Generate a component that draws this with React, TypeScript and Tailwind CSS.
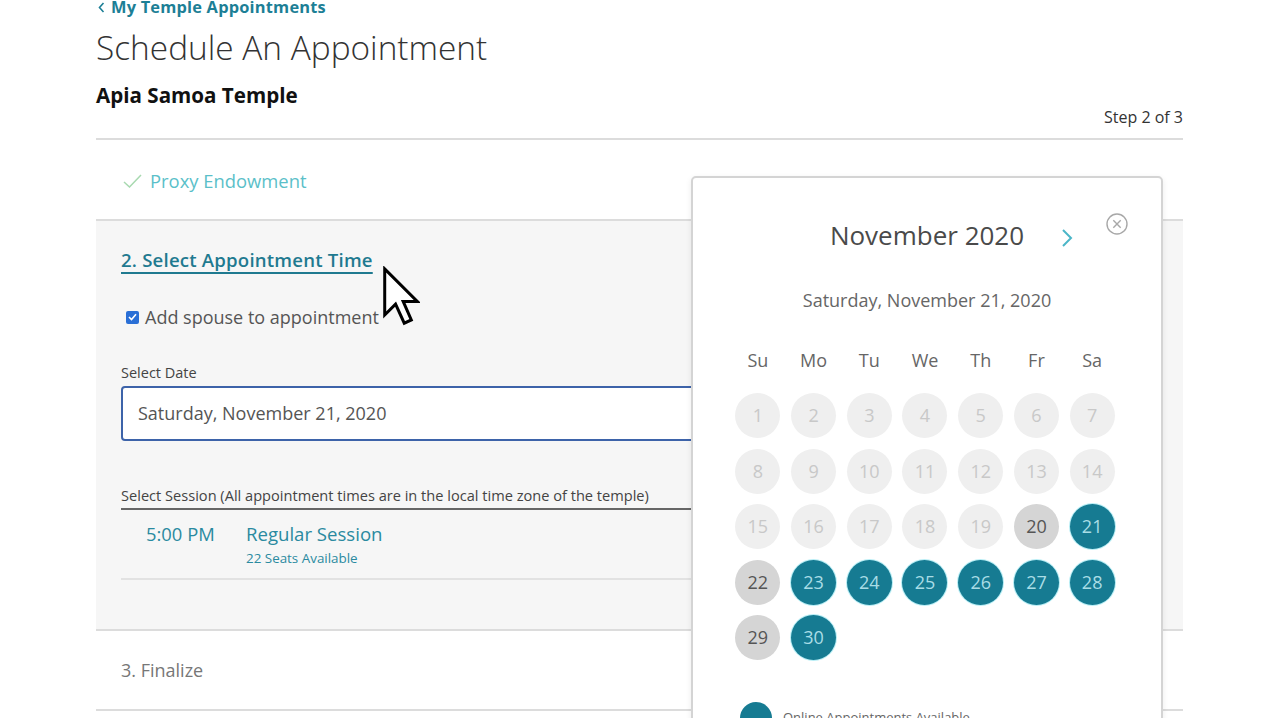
import React from "react";

const disabled = Array.from({ length: 19 }, (_, i) => i + 1);

type Day = { n: number; kind: "off" | "gray" | "teal" };

const days: Day[] = [
  ...disabled.map((n) => ({ n, kind: "off" as const })),
  { n: 20, kind: "gray" },
  { n: 21, kind: "teal" },
  { n: 22, kind: "gray" },
  { n: 23, kind: "teal" },
  { n: 24, kind: "teal" },
  { n: 25, kind: "teal" },
  { n: 26, kind: "teal" },
  { n: 27, kind: "teal" },
  { n: 28, kind: "teal" },
  { n: 29, kind: "gray" },
  { n: 30, kind: "teal" },
];

function DayCell({ d }: { d: Day }) {
  const cls =
    d.kind === "off"
      ? "bg-[#efefef] text-[#c8c8c8]"
      : d.kind === "gray"
      ? "bg-[#d5d5d5] text-[#555555]"
      : "bg-[#167b92] text-[#a9dde6] ring-1 ring-[#b8eef5]";
  return (
    <div className="h-[55.5px] flex items-center justify-center">
      <div className={`w-[45px] h-[45px] rounded-full flex items-center justify-center text-[18px] ${cls}`}>
        {d.n}
      </div>
    </div>
  );
}

export default function App() {
  return (
    <div className="relative w-full h-[718px] overflow-hidden bg-white font-['Open_Sans',sans-serif] text-[#333]">
      <div className="ml-[96px] w-[1087px]">
        <div className="-mt-[3px] flex items-center gap-[6px] text-[16.4px] leading-[20px] font-bold text-[#1d7f96]">
          <svg width="7" height="11" viewBox="0 0 7 11" className="ml-[2px]">
            <path d="M5.5 1 L1.5 5.5 L5.5 10" fill="none" stroke="#1d7f96" strokeWidth="1.6" />
          </svg>
          <span className="tracking-[0.2px]">My Temple Appointments</span>
        </div>
        <h1 className="mt-[10px] text-[33.4px] leading-[40px] font-light text-[#333]">
          Schedule An Appointment
        </h1>
        <div className="mt-[14px] flex justify-between">
          <div className="text-[20.6px] leading-[28px] font-bold text-[#111]">Apia Samoa Temple</div>
          <div className="pt-[25px] text-[16px] leading-[22px] text-[#333]">Step 2 of 3</div>
        </div>
        <div className="mt-[10px] border-t-2 border-[#dcdcdc]" />
        <div className="h-[79px] flex items-center pl-[27px] pt-[3px] gap-[8px]">
          <svg width="19" height="14" viewBox="0 0 19 14">
            <path d="M1 8 L6.5 13 L18 1" fill="none" stroke="#a8d9b0" strokeWidth="1.5" />
          </svg>
          <span className="text-[18.4px] text-[#5bbfc9]">Proxy Endowment</span>
        </div>
        <div className="border-t-2 border-[#dcdcdc]" />
        <div className="bg-[#f6f6f6] px-[25px] pt-[26px] pb-[49px]">
          <div className="text-[18.6px] leading-[26px] font-semibold tracking-[0.2px] text-[#1f7a90] underline underline-offset-[5px] decoration-[1.5px]">
            2. Select Appointment Time
          </div>
          <div className="mt-[31px] flex items-center gap-[6px] h-[26px]">
            <div className="ml-[5px] w-[13px] h-[13px] rounded-[2px] bg-[#2a6fd6] flex items-center justify-center">
              <svg width="9" height="8" viewBox="0 0 9 8">
                <path d="M1 4 L3.5 6.5 L8 1.2" fill="none" stroke="white" strokeWidth="1.6" />
              </svg>
            </div>
            <span className="text-[18px] text-[#555]">Add spouse to appointment</span>
          </div>
          <div className="mt-[33px] text-[14.5px] leading-[20px] text-[#444]">Select Date</div>
          <div className="mt-[3px] h-[55px] border-2 border-[#3d63a9] rounded-[4px] bg-white flex items-center pl-[15px] text-[18px] text-[#555]">
            Saturday, November 21, 2020
          </div>
          <div className="mt-[44px] text-[14.6px] leading-[20px] text-[#444] pb-[3px] border-b-2 border-[#666]">
            Select Session (All appointment times are in the local time zone of the temple)
          </div>
          <div className="pl-[25px] pt-[12px] pb-[12px] border-b-2 border-[#e2e2e2] flex">
            <div className="w-[100px] text-[18.4px] leading-[24px] text-[#2a8aa0]">5:00 PM</div>
            <div>
              <div className="text-[18.6px] leading-[24px] text-[#2a8aa0]">Regular Session</div>
              <div className="mt-[4px] text-[13.4px] leading-[16px] text-[#2a8aa0]">22 Seats Available</div>
            </div>
          </div>
        </div>
        <div className="border-t-2 border-[#dcdcdc]" />
        <div className="h-[78px] flex items-center pl-[25px] text-[18px] text-[#777]">3. Finalize</div>
        <div className="border-t-2 border-[#dcdcdc]" />
      </div>

      {/* Calendar popup */}
      <div className="absolute left-[691px] top-[176px] w-[472px] h-[580px] bg-white border-2 border-[#d4d4d4] rounded-[5px] shadow-[0_2px_6px_rgba(0,0,0,0.08)]">
        <div className="relative pt-[39px] text-center">
          <div className="text-[26px] leading-[36px] text-[#4a4a4a]">November 2020</div>
          <svg className="absolute left-[368px] top-[50px]" width="12" height="20" viewBox="0 0 12 20">
            <path d="M2 2 L10 10 L2 18" fill="none" stroke="#4bb6c8" strokeWidth="2" />
          </svg>
          <svg className="absolute left-[412px] top-[34px]" width="24" height="24" viewBox="0 0 24 24">
            <circle cx="12" cy="12" r="10" fill="none" stroke="#a8a8a8" strokeWidth="1.4" />
            <path d="M8.3 8.3 L15.7 15.7 M15.7 8.3 L8.3 15.7" stroke="#a8a8a8" strokeWidth="1.4" />
          </svg>
          <div className="mt-[34px] text-[18px] leading-[26px] text-[#666]">Saturday, November 21, 2020</div>
        </div>
        <div className="mt-[34px] ml-[37px] w-[390px] grid grid-cols-7 text-center text-[18px] leading-[26px] text-[#666]">
          {["Su", "Mo", "Tu", "We", "Th", "Fr", "Sa"].map((w) => (
            <div key={w}>{w}</div>
          ))}
        </div>
        <div className="mt-[15px] ml-[37px] w-[390px] grid grid-cols-7">
          {days.map((d) => (
            <DayCell key={d.n} d={d} />
          ))}
        </div>
        <div className="mt-[36px] ml-[47px] flex items-center gap-[11px]">
          <div className="w-[32px] h-[32px] rounded-full bg-[#167b92]" />
          <span className="text-[13px] text-[#666]">Online Appointments Available</span>
        </div>
      </div>

      {/* Mouse cursor */}
      <svg className="absolute left-[382px] top-[266px]" width="38" height="60" viewBox="0 0 14 22">
        <path
          d="M1 1 L1 18 L5 14 L8.2 21 L10.8 19.8 L7.8 13 L13 13 Z"
          fill="white"
          stroke="black"
          strokeWidth="1.1"
          strokeLinejoin="miter"
        />
      </svg>
    </div>
  );
}
